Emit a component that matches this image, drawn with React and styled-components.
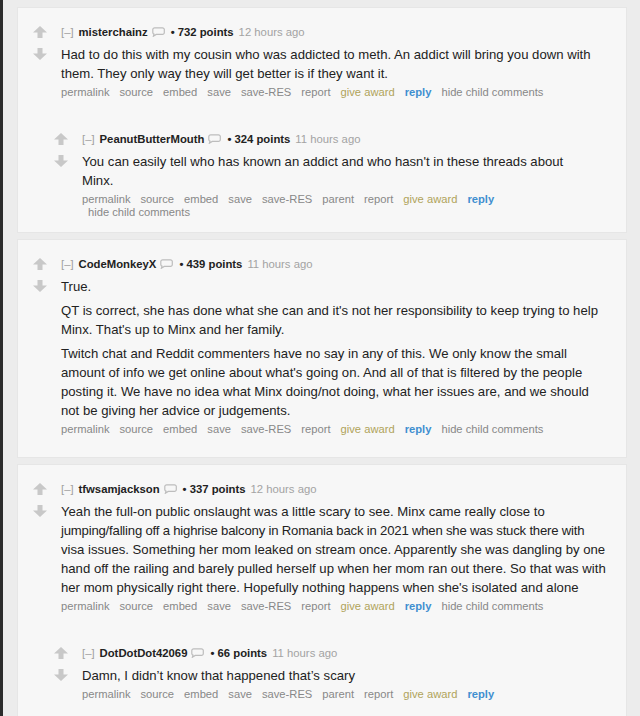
import React from "react";
import styled, { createGlobalStyle } from "styled-components";

const GlobalStyle = createGlobalStyle`
  html, body {
    margin: 0;
    padding: 0;
    background: #ececec;
  }
  body {
    font-family: "Liberation Sans", Arial, sans-serif;
    color: #222;
  }
`;

const Page = styled.div`
  height: 716px;
  overflow: hidden;
  border-left: 3px solid #2b2b2b;
  padding: 7px 13px 0 14px;
  box-sizing: border-box;
  display: flex;
  flex-direction: column;
  gap: 6px;
`;

const Thing = styled.div`
  flex: none;
  background: #f7f7f7;
  border: 1px solid #e6e6e6;
  padding: 15px 18px ${(p) => p.$bottom || 12}px 15px;
`;

const CommentRow = styled.div`
  display: flex;
  align-items: flex-start;
`;

const Midcol = styled.div`
  width: 28px;
  flex: none;
  display: flex;
  flex-direction: column;
  padding-top: 3px;
  gap: 10px;
`;

const Arrow = styled.svg`
  width: 14px;
  height: 12px;
  display: block;
  fill: #c8c8c8;
`;

const Entry = styled.div`
  flex: 1;
  min-width: 0;
`;

const Tagline = styled.div`
  font-size: 11.3px;
  line-height: 18px;
  color: #888;
  display: flex;
  align-items: center;
  white-space: nowrap;
`;

const Expand = styled.span`
  color: #a0a0a0;
  margin-right: 5px;
`;

const Author = styled.span`
  color: #222;
  font-weight: bold;
`;

const Bubble = styled.svg`
  width: 13px;
  height: 10px;
  margin: 0 6px 0 4px;
  fill: none;
  stroke: #bdbdbd;
  stroke-width: 1.2;
`;

const Score = styled.span`
  color: #222;
  font-weight: bold;
  margin-right: 5px;
`;

const Time = styled.span`
  color: #a3a3a3;
`;

const Body = styled.div`
  margin-top: 4px;
  font-size: 13.15px;
  line-height: 19px;
  color: #222;

  p {
    margin: 0 0 5px;
  }
  p:last-child {
    margin-bottom: 0;
  }
`;

// the reference's hinted glyphs run a touch narrower on this one line
const Tight = styled.span`
  letter-spacing: -0.2px;
`;

const FlatList = styled.ul`
  list-style: none;
  margin: 3px 0 0;
  padding: 0;
  font-size: 11.2px;
  line-height: 13px;
`;

const LinkItem = styled.li`
  display: inline-block;
  padding: 0 4px 0 6px;
  color: ${(p) =>
    p.$kind === "award" ? "#b0a35a" : p.$kind === "reply" ? "#3f8fd0" : "#888"};
  font-weight: ${(p) => (p.$kind === "reply" ? "bold" : "normal")};
  &:first-child {
    padding-left: 0;
  }
`;

const Children = styled.div`
  margin: ${(p) => p.$gap}px 18px 0 -7px;
`;

const UpArrow = () => (
  <Arrow viewBox="0 0 14 12">
    <path d="M7 0 L14 6.5 L9.5 6.5 L9.5 12 L4.5 12 L4.5 6.5 L0 6.5 Z" />
  </Arrow>
);

const DownArrow = () => (
  <Arrow viewBox="0 0 14 12">
    <path d="M7 12 L14 5.5 L9.5 5.5 L9.5 0 L4.5 0 L4.5 5.5 L0 5.5 Z" />
  </Arrow>
);

const ChatBubble = () => (
  <Bubble viewBox="0 0 13 10">
    <path d="M2.6 0.8 H10.5 A1.8 1.8 0 0 1 12.3 2.6 V5.6 A1.8 1.8 0 0 1 10.5 7.4 H4.2 L1.4 9.2 L2 7.1 A1.8 1.8 0 0 1 0.8 5.6 V2.6 A1.8 1.8 0 0 1 2.6 0.8 Z" />
  </Bubble>
);

const topLinks = [
  "permalink",
  "source",
  "embed",
  "save",
  "save-RES",
  "report",
  "give award",
  "reply",
  "hide child comments",
];

const childLinks = [
  "permalink",
  "source",
  "embed",
  "save",
  "save-RES",
  "parent",
  "report",
  "give award",
  "reply",
];

const kindOf = (label) =>
  label === "give award" ? "award" : label === "reply" ? "reply" : "plain";

const Comment = ({ author, points, time, paragraphs, links, children, childGap }) => (
  <CommentRow>
    <Midcol>
      <UpArrow />
      <DownArrow />
    </Midcol>
    <Entry>
      <Tagline>
        <Expand>[–]</Expand>
        <Author>{author}</Author>
        <ChatBubble />
        <Score>• {points} points</Score>
        <Time>{time}</Time>
      </Tagline>
      <Body>
        {paragraphs.map((text, i) => (
          <p key={i}>{text}</p>
        ))}
      </Body>
      <FlatList>
        {links.map((label) => (
          <LinkItem key={label} $kind={kindOf(label)}>
            {label}
          </LinkItem>
        ))}
      </FlatList>
      {children && <Children $gap={childGap}>{children}</Children>}
    </Entry>
  </CommentRow>
);

export default function App() {
  return (
    <>
      <GlobalStyle />
      <Page>
        <Thing $bottom={13}>
          <Comment
            author="misterchainz"
            points={732}
            time="12 hours ago"
            paragraphs={[
              "Had to do this with my cousin who was addicted to meth. An addict will bring you down with them. They only way they will get better is if they want it.",
            ]}
            links={topLinks}
            childGap={31}
          >
            <Comment
              author="PeanutButterMouth"
              points={324}
              time="11 hours ago"
              paragraphs={[
                "You can easily tell who has known an addict and who hasn't in these threads about Minx.",
              ]}
              links={[...childLinks, "hide child comments"]}
            />
          </Comment>
        </Thing>

        <Thing $bottom={21}>
          <Comment
            author="CodeMonkeyX"
            points={439}
            time="11 hours ago"
            paragraphs={[
              "True.",
              "QT is correct, she has done what she can and it's not her responsibility to keep trying to help Minx. That's up to Minx and her family.",
              "Twitch chat and Reddit commenters have no say in any of this. We only know the small amount of info we get online about what's going on. And all of that is filtered by the people posting it. We have no idea what Minx doing/not doing, what her issues are, and we should not be giving her advice or judgements.",
            ]}
            links={topLinks}
          />
        </Thing>

        <Thing $bottom={19}>
          <Comment
            author="tfwsamjackson"
            points={337}
            time="12 hours ago"
            paragraphs={[
              <>
                Yeah the full-on public onslaught was a little scary to see. Minx came really
                close to{" "}
                <Tight>
                  jumping/falling off a highrise balcony in Romania back in 2021 when she was
                  stuck there with
                </Tight>{" "}
                visa issues. Something her mom leaked on stream once. Apparently she was dangling
                by one hand off the railing and barely pulled herself up when her mom ran out
                there. So that was with her mom physically right there. Hopefully nothing happens
                when she's isolated and alone
              </>,
            ]}
            links={topLinks}
            childGap={31}
          >
            <Comment
              author="DotDotDot42069"
              points={66}
              time="11 hours ago"
              paragraphs={["Damn, I didn’t know that happened that’s scary"]}
              links={childLinks}
            />
          </Comment>
        </Thing>
      </Page>
    </>
  );
}
